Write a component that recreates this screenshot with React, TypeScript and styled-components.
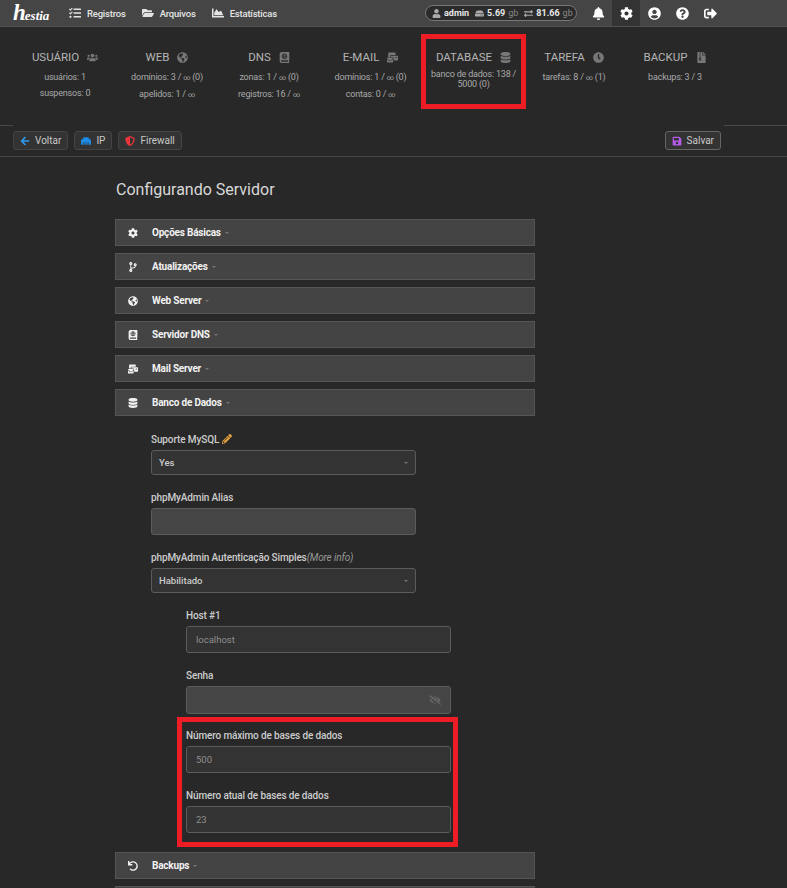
import React from "react";
import styled, { createGlobalStyle } from "styled-components";
import {
  FaArrowLeft, FaAtlas, FaBell, FaChartArea, FaClock, FaCodeBranch, FaCog, FaDatabase, FaEthernet,
  FaExchangeAlt, FaEyeSlash, FaFileArchive, FaFolderOpen, FaGlobeAmericas, FaHdd,
  FaMailBulk, FaPencilAlt, FaQuestionCircle, FaSave, FaShieldAlt, FaSignOutAlt, FaTasks, FaUndo,
  FaUser, FaUserCircle, FaUsers,
} from "react-icons/fa";

const GlobalStyle = createGlobalStyle`
  * { box-sizing: border-box; }
  html, body { margin: 0; background: #282828; }
  body { font-family: Roboto, "Liberation Sans", sans-serif; color: #ddd; overflow: hidden; height: 888px; }
`;

const TopBar = styled.header`
  height: 27px;
  background: #454545;
  border-bottom: 1px solid #505050;
  display: flex;
  align-items: center;
  padding-left: 13px;
  font-size: 10px;
`;

const Logo = styled.span`
  width: 56px;
  font-family: "Liberation Serif", serif;
  font-style: italic;
  font-weight: 700;
  font-size: 13px;
  color: #fff;
  white-space: nowrap;
  b { font-size: 23px; line-height: 20px; letter-spacing: -1px; }
`;

const NavLink = styled.a`
  display: flex;
  align-items: center;
  gap: 6px;
  margin-right: 16px;
  color: #e4e4e4;
  font-size: 9.5px;
  font-weight: 500;
  letter-spacing: -0.2px;
  svg { font-size: 12px; }
`;

const Pill = styled.div`
  margin-left: auto;
  width: 152px;
  height: 16px;
  padding-left: 6px;
  border: 1px solid #777;
  border-radius: 8px;
  background: #2b2b2b;
  display: flex;
  align-items: center;
  gap: 3px;
  font-size: 9px;
  font-weight: 700;
  color: #e8e8e8;
  svg { font-size: 9px; color: #aaa; margin-left: 3px; }
  svg:first-child { margin-left: 0; }
  em { font-style: normal; font-weight: 400; color: #888; }
`;

const IconRow = styled.div`
  display: flex;
  margin: 0 63px 0 7px;
`;

const IconTile = styled.div<{ $active?: boolean }>`
  width: 28px;
  height: 26px;
  display: flex;
  align-items: center;
  justify-content: center;
  color: #fff;
  font-size: 13px;
  background: ${({ $active }) => ($active ? "#333" : "transparent")};
`;

const StatsBar = styled.section`
  height: 98px;
  padding: 7px 0 0 14px;
  display: grid;
  grid-template-columns: 102px 102px 102px 101px 105px 96px 106px;
  align-items: start;
`;

const Stat = styled.div<{ $marked?: boolean }>`
  height: 75px;
  padding: ${({ $marked }) => ($marked ? "10px 2px 0" : "15px 0 0")};
  border: ${({ $marked }) => ($marked ? "5px solid #ee1c25" : "none")};
  text-align: center;
  color: #a9a9a9;
  font-size: 9px;
  letter-spacing: -0.2px;
  line-height: 16px;
`;

const StatTitle = styled.div`
  display: flex;
  align-items: center;
  justify-content: center;
  gap: 8px;
  height: 16px;
  margin-bottom: 4px;
  font-size: 11.5px;
  letter-spacing: 0;
  color: #b4b4b4;
  white-space: nowrap;
  svg { color: #777; font-size: 11px; flex: none; }
`;

const StatLine = styled.div`
  line-height: 16px;
  white-space: nowrap;
`;

const StatWrap = styled(StatLine)`
  white-space: normal;
  line-height: 10px;
  margin-top: 3px;
`;

const Inf = styled.span`
  font-size: 7px;
`;

const Toolbar = styled.nav`
  height: 32px;
  padding: 6px 66px 0 13px;
  display: flex;
  align-items: flex-start;
  gap: 6px;
  border-bottom: 1px solid #484848;
  background: linear-gradient(to right, #484848 13px, transparent 13px, transparent 724px, #484848 724px) top / 100% 1px no-repeat;
`;

const ToolButton = styled.button<{ $tone: string; $right?: boolean }>`
  height: 19px;
  padding: 0 6px;
  display: flex;
  align-items: center;
  gap: 5px;
  margin-left: ${({ $right }) => ($right ? "auto" : "0")};
  background: #333;
  border: 1px solid ${({ $right }) => ($right ? "#666" : "#444")};
  border-radius: 3px;
  color: #c8c8c8;
  font: 400 10px Roboto, sans-serif;
  svg { color: ${({ $tone }) => $tone}; font-size: 10px; }
`;

const Main = styled.main`
  width: 420px;
  margin-left: 115px;
`;

const Title = styled.h1`
  margin: 21px 0 17px 1px;
  font-size: 16px;
  line-height: 24px;
  font-weight: 400;
  color: #d8d8d8;
`;

const Panel = styled.div`
  height: 27px;
  margin-bottom: 7px;
  padding-left: 12px;
  display: flex;
  align-items: center;
  background: #444;
  border: 1px solid #555;
  color: #f2f2f2;
  font-size: 10px;
  letter-spacing: -0.2px;
  font-weight: 700;
`;

const PanelIcon = styled.span`
  width: 24px;
  display: flex;
  svg { font-size: 10px; }
`;

const Caret = styled.i`
  margin-left: 4px;
  border: 2px solid transparent;
  border-top: 2px solid #777;
  border-bottom: 0;
`;

const Form = styled.div`
  padding: 9px 0 0 36px;
`;

const Nested = styled.div`
  padding-left: 35px;
`;

const Field = styled.div`
  margin-bottom: 15px;
  width: 265px;
`;

const Label = styled.label`
  display: flex;
  align-items: center;
  gap: 3px;
  height: 14px;
  margin-bottom: 4px;
  font-size: 10px;
  font-weight: 500;
  letter-spacing: -0.13px;
  color: #ccc;
  svg { color: #e8a33d; font-size: 10px; }
  em { font-weight: 400; color: #999; margin-left: -3px; }
`;

const Box = styled.div<{ $filled?: boolean; $tall?: boolean }>`
  height: ${({ $tall }) => ($tall ? "28px" : "27px")};
  padding: 0 9px;
  display: flex;
  align-items: center;
  justify-content: space-between;
  background: ${({ $filled }) => ($filled ? "#454545" : "#333")};
  border: 1px solid #5c5c5c;
  border-radius: 3px;
  font-size: 9.5px;
  color: #8f8f8f;
  svg { color: #666; font-size: 12px; }
`;

const SelectBox = styled(Box)`
  height: 25px;
  padding: 0 7px;
  color: #ccc;
  font-weight: 500;
`;

const Marked = styled.div`
  width: 281px;
  height: 130px;
  margin: -12px 0 5px -9px;
  padding: 6px 4px 0;
  border: 5px solid #ee1c25;
`;

const accordion = [
  { icon: <FaCog />, name: "Opções Básicas" },
  { icon: <FaCodeBranch />, name: "Atualizações" },
  { icon: <FaGlobeAmericas />, name: "Web Server" },
  { icon: <FaAtlas />, name: "Servidor DNS" },
  { icon: <FaMailBulk />, name: "Mail Server" },
  { icon: <FaDatabase />, name: "Banco de Dados" },
];

const PanelRow = ({ icon, name }: { icon: React.ReactNode; name: string }) => (
  <Panel>
    <PanelIcon>{icon}</PanelIcon>
    {name}
    <Caret />
  </Panel>
);

const App = () => {
  return (
    <>
      <GlobalStyle />
      <TopBar>
        <Logo><b>h</b>estia</Logo>
        <NavLink><FaTasks />Registros</NavLink>
        <NavLink><FaFolderOpen />Arquivos</NavLink>
        <NavLink><FaChartArea />Estatísticas</NavLink>
        <Pill>
          <FaUser />admin <FaHdd />5.69 <em>gb</em> <FaExchangeAlt />81.66 <em>gb</em>
        </Pill>
        <IconRow>
          <IconTile><FaBell /></IconTile>
          <IconTile $active><FaCog /></IconTile>
          <IconTile><FaUserCircle /></IconTile>
          <IconTile><FaQuestionCircle /></IconTile>
          <IconTile><FaSignOutAlt /></IconTile>
        </IconRow>
      </TopBar>
      <StatsBar>
        <Stat>
          <StatTitle>USUÁRIO <FaUsers /></StatTitle>
          <StatLine>usuários: 1</StatLine>
          <StatLine>suspensos: 0</StatLine>
        </Stat>
        <Stat>
          <StatTitle>WEB <FaGlobeAmericas /></StatTitle>
          <StatLine>domínios: 3 / <Inf>∞</Inf> (0)</StatLine>
          <StatLine>apelidos: 1 / <Inf>∞</Inf></StatLine>
        </Stat>
        <Stat>
          <StatTitle>DNS <FaAtlas /></StatTitle>
          <StatLine>zonas: 1 / <Inf>∞</Inf> (0)</StatLine>
          <StatLine>registros: 16 / <Inf>∞</Inf></StatLine>
        </Stat>
        <Stat>
          <StatTitle>E-MAIL <FaMailBulk /></StatTitle>
          <StatLine>domínios: 1 / <Inf>∞</Inf> (0)</StatLine>
          <StatLine>contas: 0 / <Inf>∞</Inf></StatLine>
        </Stat>
        <Stat $marked>
          <StatTitle>DATABASE <FaDatabase /></StatTitle>
          <StatWrap>banco de dados: 138 / 5000 (0)</StatWrap>
        </Stat>
        <Stat>
          <StatTitle>TAREFA <FaClock /></StatTitle>
          <StatLine>tarefas: 8 / <Inf>∞</Inf> (1)</StatLine>
        </Stat>
        <Stat>
          <StatTitle>BACKUP <FaFileArchive /></StatTitle>
          <StatLine>backups: 3 / 3</StatLine>
        </Stat>
      </StatsBar>
      <Toolbar>
        <ToolButton $tone="#2c9cf2"><FaArrowLeft />Voltar</ToolButton>
        <ToolButton $tone="#1e8be6"><FaEthernet />IP</ToolButton>
        <ToolButton $tone="#e8343a"><FaShieldAlt />Firewall</ToolButton>
        <ToolButton $tone="#b45ce8" $right><FaSave />Salvar</ToolButton>
      </Toolbar>
      <Main>
        <Title>Configurando Servidor</Title>
        {accordion.map((item) => (
          <PanelRow key={item.name} icon={item.icon} name={item.name} />
        ))}
        <Form>
          <Field>
            <Label>Suporte MySQL <FaPencilAlt /></Label>
            <SelectBox>Yes<Caret /></SelectBox>
          </Field>
          <Field>
            <Label>phpMyAdmin Alias</Label>
            <Box $filled />
          </Field>
          <Field>
            <Label>phpMyAdmin Autenticação Simples<em><i>(More info)</i></em></Label>
            <SelectBox>Habilitado<Caret /></SelectBox>
          </Field>
          <Nested>
            <Field>
              <Label>Host #1</Label>
              <Box>localhost</Box>
            </Field>
            <Field>
              <Label>Senha</Label>
              <Box $filled $tall><span /><FaEyeSlash /></Box>
            </Field>
            <Marked>
              <Field>
                <Label>Número máximo de bases de dados</Label>
                <Box>500</Box>
              </Field>
              <Field>
                <Label>Número atual de bases de dados</Label>
                <Box>23</Box>
              </Field>
            </Marked>
          </Nested>
        </Form>
        <PanelRow icon={<FaUndo />} name="Backups" />
        <Panel />
      </Main>
    </>
  );
};

export default App;
